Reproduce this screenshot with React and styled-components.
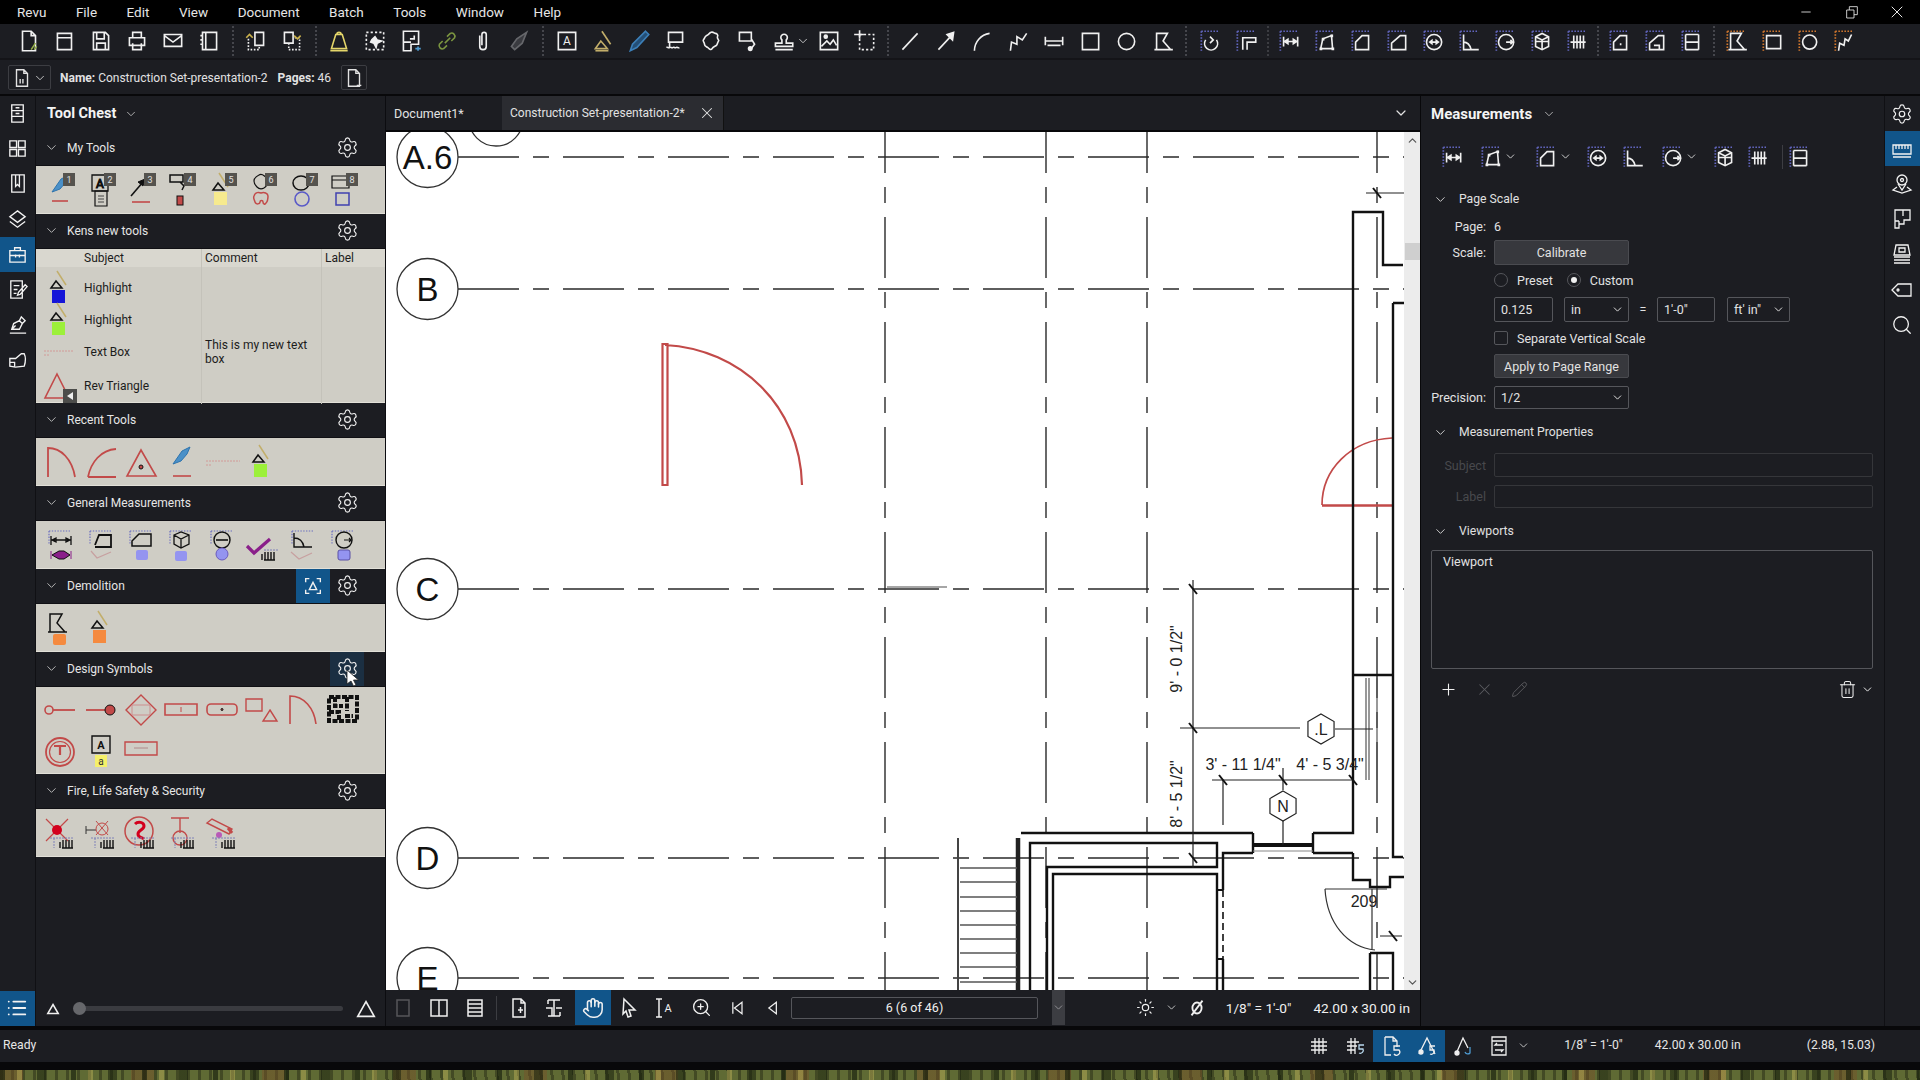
import React from "react";
import styled, { createGlobalStyle } from "styled-components";
import {
  ChevronDown,
  ChevronUp,
  Settings,
  List,
  Hand,
  X,
  Plus,
  Pencil,
  Trash2,
  Sun,
  Search,
  ZoomIn,
} from "lucide-react";

const GlobalStyle = createGlobalStyle`
  html, body {
    margin: 0;
    padding: 0;
    background: #000;
    overflow: hidden;
  }
  * { box-sizing: border-box; }
  body { font-family: Roboto, "Liberation Sans", sans-serif; }
`;

const Page = styled.div`
  width: 1920px;
  height: 1080px;
  display: flex;
  flex-direction: column;
  background: #08080a;
  color: #e2e2e2;
  font-size: 12.5px;
  overflow: hidden;
`;

const MenuBar = styled.div`
  height: 24px;
  background: #000;
  display: flex;
  align-items: center;
  gap: 29.5px;
  padding-left: 17px;
  font-size: 13.5px;
  color: #e6e6e6;
`;

const WindowButtons = styled.div`
  margin-left: auto;
  display: flex;
  align-items: center;
`;

const WinButton = styled.div`
  width: 45.5px;
  height: 24px;
  display: flex;
  align-items: center;
  justify-content: center;
`;

const ToolBar = styled.div`
  height: 36px;
  background: #1c1d22;
  display: flex;
  align-items: center;
  padding-left: 11px;
  border-bottom: 2px solid #141418;
  color: #f0f0f0;
`;

const ToolBtn = styled.div`
  width: ${({ $w }) => $w || 36}px;
  height: 34px;
  flex: none;
  display: flex;
  align-items: center;
  justify-content: ${({ $w }) => ($w ? "flex-start" : "center")};
  padding-left: ${({ $w }) => ($w ? 5 : 0)}px;
`;

const ToolSep = styled.div`
  width: ${({ $w }) => $w}px;
  height: 30px;
  flex: none;
  display: flex;
  justify-content: center;
  &::after {
    content: "";
    display: block;
    border-left: 2px dotted ${({ $thin }) => ($thin ? "#3c3d42" : "#45464c")};
  }
`;

const Glyph = styled.svg`
  width: ${({ $s }) => $s || 26}px;
  height: ${({ $s }) => $s || 26}px;
  flex: none;
  fill: none;
  stroke: currentColor;
  stroke-width: ${({ $sw }) => $sw || 1.5};
`;

const InfoBar = styled.div`
  height: 36px;
  background: #1c1d22;
  display: flex;
  align-items: center;
  padding: 1px 0 0 8px;
  font-size: 12px;
  border-bottom: 2px solid #08080a;
`;

const FileButton = styled.div`
  width: 43px;
  height: 25px;
  margin-right: 9px;
  border: 1px solid #3c3d42;
  border-radius: 2px;
  display: flex;
  align-items: center;
  padding-left: 2px;
`;

const InfoItem = styled.span`
  margin-right: ${({ $gap }) => $gap}px;
  white-space: nowrap;
  b { font-weight: 700; }
`;

const AddPageButton = styled.div`
  width: 26px;
  height: 25px;
  border: 1px solid #3c3d42;
  border-radius: 2px;
  display: flex;
  align-items: center;
  justify-content: center;
`;

const Main = styled.div`
  height: 930px;
  display: flex;
  background: #1c1d22;
`;

const Rail = styled.div`
  width: 36px;
  flex: none;
  display: flex;
  flex-direction: column;
  background: #1c1d22;
  border-${({ $right }) => ($right ? "left" : "right")}: 1px solid #101014;
`;

const RailItem = styled.div`
  height: 35.2px;
  flex: none;
  display: flex;
  align-items: center;
  justify-content: center;
  padding-right: 1px;
  color: #f2f2f2;
  background: ${({ $active }) => ($active ? "#11558a" : "transparent")};
  margin-top: ${({ $auto }) => ($auto ? "auto" : "0")};
`;

const ToolPanel = styled.div`
  width: 350px;
  flex: none;
  display: flex;
  flex-direction: column;
  border-right: 1px solid #0c0c10;
`;

const PanelTitle = styled.div`
  height: 35px;
  flex: none;
  display: flex;
  align-items: center;
  gap: ${({ $gap }) => $gap || 8}px;
  padding-left: ${({ $pad }) => $pad}px;
  font-size: ${({ $size }) => $size || 14.5}px;
  font-weight: 700;
  color: #f4f4f4;
`;

const Section = styled.div`
  display: flex;
  flex-direction: column;
`;

const SectionHead = styled.div`
  height: 35px;
  display: flex;
  align-items: center;
  padding: 0 0 1px 8px;
  color: #e6e6e6;
  font-size: 12px;
  border-bottom: 1px solid #101014;
`;

const HeadLabel = styled.span`
  margin-left: 8px;
  flex: 1;
`;

const HeadButton = styled.div`
  width: 34px;
  height: 34px;
  display: flex;
  align-items: center;
  justify-content: center;
  position: relative;
  background: ${({ $bg }) => $bg || "transparent"};
  color: #f0f0f0;
  margin-right: ${({ $mr }) => $mr || 0}px;
`;

const PointerMark = styled.svg`
  position: absolute;
  left: 16px;
  top: 17px;
  width: 13px;
  height: 18px;
`;

const IconTray = styled.div`
  background: #cfcdc5;
  display: flex;
  flex-wrap: wrap;
  row-gap: 5px;
  padding: ${({ $rows }) => ($rows > 1 ? "4px 0 3px 4px" : "5px 0 5px 4px")};
  border-bottom: 1px solid #e2e0d8;
`;

const TrayIcon = styled.div`
  width: 40.4px;
  height: 37px;
  display: flex;
  align-items: center;
  justify-content: center;
  color: #111;
`;

const ToolTable = styled.div`
  background: #cfcdc5;
  color: #1c1c1c;
  height: 154px;
  display: grid;
  grid-template-columns: 45px 120px 120px 1fr;
  grid-template-rows: 18px 37px 32px 32px 1fr;
  font-size: 12px;
  border-bottom: 1px solid #e2e0d8;
`;

const TableHead = styled.div`
  background: #d9d7cf;
  display: flex;
  align-items: center;
  padding-left: 3px;
  border-left: ${({ $line }) => ($line ? "1px solid #c4c2ba" : "none")};
`;

const TableCell = styled.div`
  display: flex;
  align-items: center;
  padding: ${({ $top }) => ($top ? "5px" : "0")} 0 0 3px;
  line-height: 14px;
  border-left: ${({ $line }) => ($line ? "1px solid #c4c2ba" : "none")};
`;

const TableIcon = styled.div`
  display: flex;
  align-items: center;
  justify-content: center;
  padding: ${({ $top }) => ($top ? "5px" : "0")} 0 0 2px;
`;

const SliderBar = styled.div`
  margin-top: auto;
  height: 35px;
  display: flex;
  align-items: center;
  padding: 0 8px 0 8px;
  color: #f0f0f0;
`;

const SliderTrack = styled.div`
  flex: 1;
  height: 5px;
  margin: 0 12px;
  background: #3a3b40;
  border-radius: 3px;
  position: relative;
`;

const SliderThumb = styled.div`
  position: absolute;
  left: -1px;
  top: -4px;
  width: 13px;
  height: 13px;
  border-radius: 50%;
  background: #66676b;
`;

const Center = styled.div`
  width: 1034px;
  flex: none;
  display: flex;
  flex-direction: column;
`;

const TabBar = styled.div`
  height: 36px;
  flex: none;
  display: flex;
  align-items: stretch;
  border-bottom: 2px solid #08080a;
  background: #1c1d22;
`;

const Tab = styled.div`
  width: ${({ $w }) => $w}px;
  display: flex;
  align-items: center;
  padding-left: ${({ $pad }) => $pad}px;
  white-space: nowrap;
  font-size: ${({ $active }) => ($active ? 12 : 12.5)}px;
  background: ${({ $active }) => ($active ? "#2b2c31" : "transparent")};
  border-right: ${({ $active }) => ($active ? "1px solid #111" : "none")};
`;

const TabClose = styled.div`
  margin-left: auto;
  margin-right: 7px;
  display: flex;
`;

const TabMenu = styled.div`
  margin-left: auto;
  width: 38px;
  display: flex;
  align-items: center;
  justify-content: center;
`;

const CanvasRow = styled.div`
  height: 858px;
  flex: none;
  display: flex;
`;

const PlanSheet = styled.svg`
  width: 1018px;
  height: 858px;
  display: block;
  background: #fff;
  flex: none;
  fill: none;
`;

const ScrollTrack = styled.div`
  width: 16px;
  flex: none;
  background: #ececec;
  color: #555;
  display: flex;
  flex-direction: column;
  align-items: center;
`;

const ScrollArrow = styled.div`
  height: 16px;
  display: flex;
  align-items: center;
  justify-content: center;
  margin-top: ${({ $end }) => ($end ? "auto" : "0")};
`;

const ScrollThumb = styled.div`
  width: 15px;
  height: 17px;
  margin-top: 95px;
  background: #cfcfcf;
`;

const DocBar = styled.div`
  height: 35px;
  flex: none;
  display: flex;
  align-items: center;
  color: #f0f0f0;
  margin-left: -1px;
`;

const DocBtn = styled.div`
  width: 36px;
  height: 35px;
  flex: none;
  display: flex;
  align-items: center;
  justify-content: center;
  margin-left: ${({ $ml }) => $ml || 0}px;
  background: ${({ $active }) => ($active ? "#11558a" : "transparent")};
  color: ${({ $dim }) => ($dim ? "#55565a" : "inherit")};
`;

const ThinRule = styled.div`
  width: 1px;
  height: 24px;
  margin: 0 3px;
  background: #3c3d42;
  flex: none;
`;

const PageField = styled.div`
  width: 247px;
  height: 22px;
  flex: none;
  border: 1px solid #55565b;
  border-radius: 2px;
  display: flex;
  align-items: center;
  justify-content: center;
  font-size: 12.5px;
`;

const PageChevron = styled.div`
  width: 13px;
  height: 35px;
  margin-left: 14px;
  flex: none;
  background: #3c3d42;
  display: flex;
  align-items: center;
  justify-content: center;
  color: #a0a0a4;
`;

const DocStats = styled.div`
  margin-left: auto;
  padding-right: 10px;
  display: flex;
  align-items: center;
  font-size: 13.7px;
  white-space: nowrap;
`;

const StatText = styled.span`
  display: flex;
  margin-left: ${({ $ml }) => $ml}px;
`;

const Measure = styled.div`
  width: 464px;
  flex: none;
  display: flex;
  flex-direction: column;
  border-left: 1px solid #08080a;
  padding: 0 11px 0 10px;
`;

const MeasureTools = styled.div`
  height: 35px;
  margin-top: 8px;
  flex: none;
  display: flex;
  align-items: center;
  padding-left: 8px;
  color: #f0f0f0;
`;

const MeasureTool = styled.div`
  width: ${({ $w }) => $w || 36}px;
  flex: none;
  display: flex;
  align-items: center;
  color: #f0f0f0;
`;

const FormRow = styled.div`
  height: ${({ $h }) => $h || 24}px;
  margin-top: ${({ $mt }) => $mt || 0}px;
  flex: none;
  display: flex;
  align-items: center;
`;

const FoldHead = styled(FormRow)`
  padding-left: 2px;
  gap: 11px;
  color: #e0e0e0;
  font-size: 12.2px;
`;

const FieldLabel = styled.span`
  width: 55px;
  margin-right: 8px;
  flex: none;
  text-align: right;
  white-space: nowrap;
  color: ${({ $off }) => ($off ? "#48494d" : "#e2e2e2")};
`;

const SoftButton = styled.div`
  width: 135px;
  height: 100%;
  display: flex;
  align-items: center;
  justify-content: center;
  background: #37383d;
  border: 1px solid #4a4b50;
  border-radius: 2px;
`;

const RadioDot = styled.span`
  width: 14px;
  height: 14px;
  flex: none;
  border-radius: 50%;
  border: 1px solid #55565b;
  margin-right: 9px;
  margin-left: ${({ $ml }) => $ml || 0}px;
  display: flex;
  align-items: center;
  justify-content: center;
  &::after {
    content: "";
    width: 6px;
    height: 6px;
    border-radius: 50%;
    background: ${({ $on }) => ($on ? "#f0f0f0" : "transparent")};
  }
`;

const TextBox = styled.div`
  width: ${({ $w }) => $w}px;
  height: 100%;
  margin-left: ${({ $ml }) => $ml || 0}px;
  flex: ${({ $grow }) => ($grow ? 1 : "none")};
  display: flex;
  align-items: center;
  justify-content: space-between;
  padding: 0 4px 0 6px;
  border: 1px solid ${({ $off }) => ($off ? "#35363a" : "#55565b")};
  border-radius: 2px;
`;

const Equals = styled.span`
  width: 28px;
  text-align: center;
`;

const CheckBox = styled.span`
  width: 14px;
  height: 14px;
  flex: none;
  margin-right: 9px;
  border: 1px solid #55565b;
  border-radius: 2px;
`;

const Indent = styled.div`
  width: 63px;
  flex: none;
`;

const ViewportBox = styled.div`
  height: 119px;
  margin-top: 7px;
  flex: none;
  padding: 3px 11px;
  border: 1px solid #55565b;
  border-radius: 2px;
`;

const ViewportTools = styled(FormRow)`
  padding-left: 8px;
  gap: 17px;
  color: #f0f0f0;
`;

const FadedTool = styled.span`
  display: flex;
  color: #5b5c60;
`;

const TrashTool = styled.span`
  margin-left: auto;
  display: flex;
  align-items: center;
  gap: 4px;
  margin-right: -1px;
`;

const StatusBar = styled.div`
  height: 32px;
  margin-top: 4px;
  flex: none;
  background: #1c1d22;
  display: flex;
  align-items: center;
  color: #e6e6e6;
  padding: 0 45px 2px 0;
  font-size: 12.2px;
  white-space: nowrap;
`;

const StatusIcons = styled.div`
  margin-left: auto;
  display: flex;
  align-items: center;
  color: #f0f0f0;
`;

const StatusBtn = styled.div`
  width: 36px;
  height: 32px;
  margin-bottom: -2px;
  display: flex;
  align-items: center;
  justify-content: center;
  background: ${({ $active }) => ($active ? "#11558a" : "transparent")};
`;

const Wallpaper = styled.div`
  height: 10px;
  margin-top: 8px;
  flex: none;
  background:
    repeating-linear-gradient(90deg, rgba(18, 26, 10, 0.6) 0 5px, transparent 5px 17px, rgba(205, 190, 95, 0.4) 17px 22px, transparent 22px 37px, rgba(18, 26, 10, 0.5) 37px 46px, transparent 46px 71px),
    repeating-linear-gradient(90deg, rgba(120, 80, 40, 0.45) 0 23px, transparent 23px 131px),
    repeating-linear-gradient(87deg, rgba(0, 0, 0, 0.3) 0 3px, transparent 3px 11px),
    #5f6a34;
`;

const RED = "#c24a49";
const BLUE_DOT = "#6468c4";
const ORANGE_DOT = "#d77a2e";

// ruled corner that marks every measurement tool
const Ruled = ({ c = BLUE_DOT }) => (
  <path d="M4 3h16M4 3v18" stroke={c} strokeDasharray="1.4 1.4" strokeWidth="1.6" />
);

const shapes = {
  length: <path d="M7 8v9M20 8v9M7 12.5h13M8 12.5l3-2v4zM19 12.5l-3-2v4z" />,
  polyline: (
    <>
      <path d="M8 19l2-9 8-3 1 12z" />
      <path d="M7 18h2.500v2.500H7zM9 9h2.500v2.500H9zM17 6h2.500v2.500H17zM18 18h2.500v2.500H18z" fill="currentColor" stroke="none" />
    </>
  ),
  area: <path d="M7 20v-7l6-6h6v13z" />,
  areaLow: <path d="M7 20v-6l8-7h5v13z" />,
  perimeter: <><circle cx="13" cy="13" r="7" /><path d="M9 13h8M9 13l2-1.500v3zM17 13l-2-1.500v3z" /></>,
  angle: <path d="M7 6v14h14M7 13c4 0 6 3 7 7" />,
  radius: <><circle cx="13" cy="13" r="7" /><path d="M13 13h6l-2-2M19 13l-2 2" /></>,
  volume: <><path d="M7 8l6-3 6 3v9l-6 3-6-3z" /><path d="M7 8l6 3 6-3M13 11v9M7 12.500h12" /></>,
  count: <path d="M9 7v12M12 7v12M15 7v12M18 7v12M6 13h14" />,
  cutArea: <><path d="M7 20v-7l6-6h6v13z" /><path d="M13 15h1M13.500 14v2" /></>,
  cutLow: <><path d="M7 20v-6l8-7h5v13z" /><path d="M11 16h5v4" /></>,
  span: <path d="M7 6v14M19 6v14M7 6h12M7 20h12M7 13h12" />,
  flag: <path d="M7 5h10l-4 7 7 8H7zM5 20h17" />,
  rect: <path d="M7 7h13v12H7z" />,
  circle: <circle cx="13.500" cy="13" r="6.500" />,
  zig: <path d="M7 21l1-7 4 2 1-6 3 2 3-6" />,
};

const tb = {
  newDoc: <><path d="M6 3h8l4 4v14H6zM14 3v4h4" /><path d="M14 20l4-6M17 20l2-3" stroke="#95b04a" /></>,
  open: <path d="M5 5h13v15H5zM5 9h13" />,
  save: <path d="M5 4h11l3 3v13H5zM8 4v6h7V4M8 20v-6h8v6" />,
  print: <path d="M8 9V4h8v5M5 9h14v7H5zM8 14v6h8v-6" />,
  mail: <path d="M4 6h16v11H4zM4 7l8 6 8-6" />,
  notebook: <path d="M6 4h13v16H6zM9 4v16M4 7h2M4 11h2M4 15h2" />,
  impIn: <><path d="M11 4h8v12h-8z" /><path d="M5 10v10h10v-4" strokeDasharray="1.500 1.500" /><path d="M3 9l3-3 3 3" stroke="#c9b04a" /></>,
  impOut: <><path d="M5 4h8v10H5z" /><path d="M9 14v6h10V9h-6" strokeDasharray="1.500 1.500" /><path d="M14 7l3 3 3-3" stroke="#c9b04a" /></>,
  weight: <path d="M9 6h6l4 13H5zM4 21h16M10 6a2 2 0 0 1 4 0" stroke="#e4d66a" />,
  lasso: <><path d="M4 4h16v16H4z" strokeDasharray="2 2" /><path d="M9 11l3-3 2 3 4 1-4 2-1 4-2-4-3-1z" fill="currentColor" /></>,
  sheet: <><path d="M5 3h14v12H12v6H5zM5 13h7" /><path d="M11 10h4v-3" /><path d="M16 19h5M18.500 17v4" stroke="#4e9ad0" /></>,
  link: <path d="M10 14l5-5M8 12l-3 3a3 3 0 0 0 4 4l3-3M16 12l3-3a3 3 0 0 0-4-4l-3 3" stroke="#7a9440" />,
  clip: <path d="M9 7v10a3 3 0 0 0 6 0V6a2 2 0 0 0-4 0v10" />,
  flash: <path d="M8 20l-3-3 5-7 9-6-4 10z" stroke="#66676b" fill="#3a3b40" />,
  textBox: <><path d="M4 4h16v16H4z" /><text x="12" y="16" fontSize="11" textAnchor="middle" fill="currentColor" stroke="none" fontFamily="Roboto">A</text></>,
  compass: <><path d="M11 3l8 12" stroke="#c2ae6a" /><path d="M5 19l5-7 6 7z" stroke="#c2ae6a" /><path d="M5 21h12" stroke="#c2ae6a" /></>,
  pen: <path d="M18 3l3 3-11 12-6 3 2-6z" stroke="#3c7fb8" fill="#244f77" />,
  rectCloud: <path d="M6 4h13v9H6zM7 13v5M4 18c1-1 2 1 3 0s2 1 3 0 2 1 3 0 2 1 3 0" />,
  cloud: <path d="M12 4c2-1 3 1 4 1s3 1 2 3 2 3 1 4-1 3-2 4-3 1-4 3-3 0-4-1-3-1-3-3-2-3-1-4 1-3 3-4 3-3 4-3z" />,
  callout: <><path d="M5 4h11v8H5zM16 10l3 5-3 4" /><circle cx="15" cy="19" r="1.600" fill="currentColor" /></>,
  stamp: <path d="M5 20h16M5 17h16v-3h-6v-3a3 3 0 1 0-4 0v3H5z" />,
  image: <><path d="M4 4h16v16H4z" /><path d="M5 17l5-5 3 3 3-4 3 5" /><circle cx="9" cy="8" r="1.400" fill="currentColor" /></>,
  crop: <><path d="M7 6h13v14H7z" strokeDasharray="2 2" /><path d="M2 6h9M7 2v8" /></>,
  line: <path d="M5 20L19 5" />,
  arrow: <><path d="M5 20L19 5" /><path d="M13 6l6-2-1 7z" fill="currentColor" /></>,
  arc: <path d="M5 21c0-8 6-15 14-16" />,
  zig: <path d="M5 21l1-8 5 2 0-7 5 3 4-6" />,
  dim: <path d="M4 8v8M20 8v8M4 12h16M6 16h12" />,
  sameRect: <path d="M5 5h15v15H5z" />,
  ellipse: <circle cx="12.500" cy="12.500" r="7.500" />,
  flag: shapes.flag,
  ruleSync: <><Ruled /><path d="M18 11a6 6 0 1 1-10 0M12 8l3 3-3 3" /></>,
  ruleStair: <><Ruled /><path d="M9 20V9h12v4h-8v7M13 13v7" /></>,
  pageAdd: <><path d="M7 3h8l4 4v14H7zM15 3v4h4" /><path d="M12 14h5M14.500 11v6" /></>,
  fit: <path d="M6 4h12M6 20h12M12 4v16M6 4v4M18 16v4M4 12h6v8M20 12h-6" />,
  singlePage: <path d="M6 4h12v16H6z" />,
  twoCol: <path d="M4 4h16v16H4zM12 4v16" />,
  rows: <path d="M5 4h14v16H5zM5 8h14M5 12h14M5 16h14" />,
  pointer: <path d="M7 3l11 11h-6l2 6-3 1-2-6-3 3z" />,
  select: <><path d="M6 3v18M3 3h6M3 21h6" /><text x="15" y="16" fontSize="11" fill="currentColor" stroke="none" textAnchor="middle" fontFamily="Roboto">A</text></>,
  first: <path d="M7 5v14M18 5L9 12l9 7z" />,
  prev: <path d="M16 5L7 12l9 7z" />,
  noSync: <><path d="M6 20L18 4" /><ellipse cx="12" cy="12" rx="5" ry="6" /></>,
  grid: <path d="M4 8h16M4 12h16M4 16h16M8 4v16M12 4v16M16 4v16" />,
  snap: <><path d="M4 8h12M4 12h10M4 16h8M8 4v16M12 4v16" /><path d="M21 11h-5v4h4a3 3 0 0 1-4 4" stroke="#b8d8ee" /></>,
  snapPage: <><path d="M6 3h8l4 4v6M6 3v18h6M14 3v4h4" /><path d="M21 12h-6v4h5a3 3 0 0 1-5 4" /></>,
  snapTool: <><path d="M4 20l8-16 8 16" /><circle cx="6" cy="18" r="2" fill="currentColor" /><path d="M20 12h-5v4h4a3 3 0 0 1-4 4" /></>,
  snapOff: <><path d="M5 20l7-16 5 10" /><circle cx="6" cy="19" r="2" fill="currentColor" /><path d="M19 13v6a3 3 0 0 1-5-1" stroke="#4e9ad0" /></>,
  swap: <path d="M5 3h14v18H5zM5 7h14M16 11H8l2-2M8 16h8l-2 2" />,
};

const measured = (name, c = BLUE_DOT) => (
  <>
    <Ruled c={c} />
    {shapes[name]}
  </>
);

const TbIcon = ({ icon, size, sw }) => (
  <Glyph viewBox="0 0 24 24" $s={size} $sw={sw}>
    {icon}
  </Glyph>
);

const rail = {
  files: <path d="M6 3h12v18H6zM6 9h12M6 15h12M10 6h4M10 12h4" />,
  thumbs: <path d="M4 4h7v7H4zM13 4h7v7h-7zM4 13h7v7H4zM13 13h7v7h-7z" />,
  bookmark: <path d="M6 3h13v18H6zM10 3v12l2-2 2 2V3" />,
  layers: <path d="M12 3l8 6-8 6-8-6zM4 14l8 6 8-6" />,
  chest: <path d="M4 8h16v12H4zM9 8V5h6v3M4 13h16M10 12v3M14 12v3" />,
  markups: <path d="M5 3h12v18H5zM8 8h6M8 12h4M8 16h3M20 7l-7 8-1 3 3-1 7-8z" />,
  sign: <path d="M4 21h17M6 17l2-6 6-3 3 3-3 6zM14 8l2-4 4 4-3 3M6 17l4-4" />,
  cloud: <path d="M4 11h6l6-5h3c2 4 1 10 0 13l-9 1-6-1zM4 15h5v4" />,
  pin: <><circle cx="12" cy="8" r="5" /><circle cx="12" cy="8" r="1.500" /><path d="M8 12l4 6 4-6M7 15l-4 3 9 3 9-3-4-3" /></>,
  plan: <path d="M5 3h15v10h-6v4H9v4H5zM5 14h4M13 3v6M9 17v-3" />,
  stack: <path d="M6 3h12l2 10H4zM9 6h6v4H9zM4 15h16M4 18h16M4 21h16" />,
  tag: <><path d="M21 6H8l-6 6 6 6h13z" /><circle cx="8" cy="12" r="1" /></>,
  ruler: <path d="M3 8h18v9H3zM6 8v4M9 8v4M12 8v4M15 8v4M18 8v4M3 20h18" />,
};

const leftRail = ["files", "thumbs", "bookmark", "layers", "chest", "markups", "sign", "cloud"];
const rightRail = ["gear", "ruler", "pin", "plan", "stack", "tag", "search"];

const toolbarGroups = [
  { sep: 11, items: [tb.newDoc, tb.open, tb.save, tb.print, tb.mail, tb.notebook] },
  { sep: 11, items: [tb.impIn, tb.impOut] },
  { sep: 12, items: [tb.weight, tb.lasso, tb.sheet, tb.link, tb.clip, tb.flash] },
  { sep: 9, items: [tb.textBox, tb.compass, tb.pen, tb.rectCloud, tb.cloud, tb.callout, "stamp", tb.image, tb.crop] },
  { sep: 12, items: [tb.line, tb.arrow, tb.arc, tb.zig, tb.dim, tb.sameRect, tb.ellipse, tb.flag] },
  { sep: 7, thin: true, items: [tb.ruleSync, tb.ruleStair] },
  { sep: 6, items: ["length", "polyline", "area", "areaLow", "perimeter", "angle", "radius", "volume", "count"].map((n) => measured(n)) },
  { sep: 9, items: ["cutArea", "cutLow", "span"].map((n) => measured(n)) },
  { items: ["flag", "rect", "circle", "zig"].map((n) => measured(n, ORANGE_DOT)) },
];

const measureTools = [
  { icon: "length", w: 39 },
  { icon: "polyline", w: 55, more: true },
  { icon: "area", w: 51, more: true },
  { icon: "perimeter", w: 36 },
  { icon: "angle", w: 39 },
  { icon: "radius", w: 52, more: true },
  { icon: "volume", w: 34 },
  { icon: "count", w: 34 },
];

// ----- chest tool pictures, drawn on a 36 unit square
const Badge = ({ n }) => (
  <g stroke="none">
    <rect x="21" y="1" width="12" height="13" fill="#55534e" />
    <text x="27" y="11" fontSize="9" fill="#e0e0e0" textAnchor="middle" fontFamily="Roboto">
      {n}
    </text>
  </g>
);

const Compass = () => (
  <g>
    <path d="M15 1l9 14" stroke="#c2ae6a" strokeWidth="1.500" />
    <path d="M9 18l5-7 6 7z" stroke="#111" strokeWidth="1.500" />
  </g>
);

const Brush = () => <path d="M27 3l-8 4-9 13 8-3 6-7z" fill="#4a90c8" stroke="#2f74ad" strokeWidth="1" />;
const Tally = () => <path d="M21 25v8M24 25v8M27 25v8M30 25v8M20 33h11M18 27v6" stroke="#111" strokeWidth="1.400" />;
const TallyLine = () => <path d="M8 23h24M12 23v10" stroke="#7f81b8" strokeWidth="1" strokeDasharray="2 1" />;
const Ruler36 = () => <path d="M7 4h22M7 4v14" stroke="#6a6ec0" strokeWidth="1.200" strokeDasharray="1.400 1.400" />;

const highlight = (fill) => (
  <>
    <Compass />
    <rect x="10" y="20" width="13" height="13" fill={fill} stroke="none" />
  </>
);

const myTools = [
  <><Brush /><path d="M10 29h16" stroke={RED} strokeWidth="1.600" /><Badge n="1" /></>,
  <><path d="M9 3h16v16H9z" stroke="#111" strokeWidth="1.300" /><text x="17" y="16" fontSize="12" fill="#111" textAnchor="middle" fontFamily="Roboto">A</text><path d="M12 19h12v15H12z" stroke="#111" strokeWidth="1.200" /><path d="M15 24h6M15 27h6M15 30h6" stroke="#444" /><Badge n="2" /></>,
  <><path d="M8 24l12-14" stroke="#111" strokeWidth="1.600" /><path d="M15 10l7-3-2 7z" fill="#111" /><path d="M9 30h18" stroke={RED} strokeWidth="1.600" /><Badge n="3" /></>,
  <><path d="M7 3h13v7H7zM17 10l4 4-2 4" stroke="#111" strokeWidth="1.500" /><rect x="14" y="24" width="6" height="9" fill={RED} /><Badge n="4" /></>,
  <>{highlight("#f6ea8e")}<Badge n="5" /></>,
  <><path d="M15 3c3-2 5 1 7 2s3 4 2 6-2 4-4 5-5 1-7-1-3-3-3-6 3-5 5-6z" stroke="#111" strokeWidth="1.200" /><path d="M10 24c1-4 5-4 7-3 3-1 7 0 7 3s0 5-2 7c-1 2-3 1-3-1s-3-2-3 0-4 3-5 0-2-4-1-6z" stroke={RED} strokeWidth="1.500" /><Badge n="6" /></>,
  <><ellipse cx="16" cy="11" rx="8" ry="7" stroke="#111" strokeWidth="1.500" /><circle cx="17" cy="27" r="7" stroke="#5a5ac8" strokeWidth="1.600" /><Badge n="7" /></>,
  <><path d="M7 4h17v12H7zM7 8h17" stroke="#111" strokeWidth="1.200" /><path d="M11 21h13v12H11z" stroke="#4242b0" strokeWidth="1.500" /><Badge n="8" /></>,
];

const doorArc = (
  <path d="M5 32V4c14 0 24 12 26 28" stroke={RED} strokeWidth="1.600" />
);

const recentTools = [
  <path d="M6 33V4c13 0 24 11 27 29" stroke={RED} strokeWidth="1.800" />,
  <path d="M5 33h28M5 33C8 18 18 6 33 5" stroke={RED} strokeWidth="1.800" />,
  <><path d="M18 6L33 32H4z" stroke={RED} strokeWidth="1.600" /><circle cx="18" cy="23" r="2" fill={RED} /></>,
  <><Brush /><path d="M10 32h18" stroke={RED} strokeWidth="1.600" /></>,
  <path d="M2 17h34M2 21h6" stroke="#d29a97" strokeWidth="1" strokeDasharray="2 1" />,
  <>{highlight("#9cf03a")}</>,
];

const generalTools = [
  <><Ruler36 /><path d="M9 9v9M29 9v9M9 13h20M10 13l4-2v4zM28 13l-4-2v4z" stroke="#111" strokeWidth="1.300" /><path d="M10 28l7-4 5 0 6 4-6 4h-5z" fill="#8a1f8a" /><path d="M9 24v8M29 24v8" stroke="#8a1f8a" /></>,
  <><Ruler36 /><path d="M12 18l4-10h12v12H12" stroke="#111" strokeWidth="1.800" /><path d="M8 24l6 7 14-6" stroke="#c7a0a0" strokeWidth="1.200" /></>,
  <><Ruler36 /><path d="M9 19v-5l7-7h12v12z" stroke="#111" strokeWidth="1.500" /><rect x="13" y="23" width="12" height="10" rx="2" fill="#9494f0" stroke="none" /></>,
  <><Ruler36 /><path d="M11 8l7-3 8 3v9l-8 4-7-4z M11 8l7 4 8-4M18 12v9" stroke="#111" strokeWidth="1.300" /><rect x="12" y="24" width="12" height="10" rx="2" fill="#9494f0" stroke="none" /></>,
  <><Ruler36 /><circle cx="18" cy="13" r="8" stroke="#111" strokeWidth="1.400" /><path d="M12 13h12" stroke="#111" strokeWidth="1.600" /><circle cx="18" cy="27" r="6" fill="#9494f0" stroke="#6a5abf" /></>,
  <><path d="M3 19l7 7 16-14" stroke="#8a1f8a" strokeWidth="3.200" /><Tally /><path d="M20 23h14" stroke="#7f81b8" strokeDasharray="2 1" /></>,
  <><Ruler36 /><path d="M9 6v14h18M9 11c6 0 9 4 10 9" stroke="#111" strokeWidth="1.400" /><path d="M6 25l8 7 13-6" stroke="#c7a0a0" strokeWidth="1.200" /></>,
  <><Ruler36 /><circle cx="19" cy="13" r="8" stroke="#111" strokeWidth="1.400" /><path d="M19 13h7l-2-2M26 13l-2 2" stroke="#111" strokeWidth="1.200" /><rect x="13" y="23" width="12" height="10" rx="2" fill="#9494f0" stroke="#5a50a5" /></>,
];

const demoTools = [
  <><path d="M8 4h12l-5 9 8 9H8zM6 22h19" stroke="#111" strokeWidth="1.500" /><rect x="11" y="24" width="13" height="11" rx="2" fill="#f58a3f" stroke="none" /></>,
  <>{highlight("#f58a3f")}</>,
];

const lineSym = (
  <><circle cx="7" cy="18" r="4" stroke={RED} strokeWidth="1.600" /><path d="M11 18h22" stroke={RED} strokeWidth="1.800" /></>
);

const mazeSym = (
  <path d="M4 5h28v24H4zM10 5v9h8M22 5v14M4 20h10v9M20 24h8" stroke="#111" strokeWidth="4" strokeDasharray="5 1.500" />
);

const designTools = [
  lineSym,
  <><path d="M3 18h22" stroke={RED} strokeWidth="1.800" /><circle cx="27" cy="18" r="5" fill={RED} /></>,
  <><path d="M18 3l15 15-15 15L3 18z" stroke={RED} strokeWidth="1.400" /><path d="M9 13h18v10H9z" stroke="#cc8f8f" strokeWidth="1" /></>,
  <><path d="M2 12h32v11H2z" stroke={RED} strokeWidth="1.600" /><path d="M18 15v5" stroke={RED} /></>,
  <><rect x="3" y="12" width="30" height="11" rx="4" stroke={RED} strokeWidth="1.600" /><circle cx="18" cy="17.500" r="1" fill={RED} /></>,
  <><path d="M2 7h16v12H2zM26 18l7 11H19z" stroke={RED} strokeWidth="1.400" /></>,
  doorArc,
  mazeSym,
  <><circle cx="18" cy="18" r="14" stroke={RED} strokeWidth="1.800" /><circle cx="18" cy="18" r="10.500" stroke={RED} strokeWidth="1.200" /><path d="M12 12h12M18 12v9" stroke={RED} strokeWidth="2.200" /></>,
  <><path d="M9 2h18v17H9z" stroke="#111" strokeWidth="1.400" /><text x="18" y="15" fontSize="11" fill="#111" stroke="none" textAnchor="middle" fontFamily="Roboto" fontWeight="700">A</text><rect x="12" y="21" width="12" height="12" fill="#f5f06a" stroke="none" /><text x="18" y="31" fontSize="10" fill="#333" stroke="none" textAnchor="middle" fontFamily="Roboto">a</text></>,
  <><path d="M2 8h32v13H2z" stroke={RED} strokeWidth="1.400" /><path d="M11 14h14" stroke="#b08a8a" /></>,
];

const fireMark = (children) => (
  <>
    {children}
    <TallyLine />
    <Tally />
  </>
);

const fireTools = [
  fireMark(<><path d="M4 4l22 22M26 4L4 26" stroke={RED} strokeWidth="1.200" /><circle cx="15" cy="15" r="5" fill="#d3001d" stroke="none" /></>),
  fireMark(<><path d="M3 15h10M3 11v8" stroke="#333" /><circle cx="19" cy="14" r="6" stroke={RED} /><path d="M13 6l12 14M25 6L13 20" stroke={RED} /></>),
  fireMark(<><circle cx="16" cy="16" r="14" stroke={RED} strokeWidth="1.500" /><path d="M12 9c3-3 9-2 9 2s-6 4-6 8 4 3 6 5" stroke="#d3001d" strokeWidth="3" /></>),
  fireMark(<><path d="M8 3h18M17 3v15" stroke={RED} strokeWidth="1.400" /><circle cx="17" cy="23" r="7" stroke={RED} strokeWidth="1.400" /></>),
  fireMark(<><path d="M3 8l5-4 20 10-3 5z" stroke={RED} strokeWidth="1.400" /><path d="M24 13l4 5" stroke={RED} strokeWidth="3" /><circle cx="15" cy="20" r="3" fill="#b85ab8" stroke="none" /></>),
];

const tableRows = [
  { icon: highlight("#1515d8"), subject: "Highlight" },
  { icon: highlight("#9cf03a"), subject: "Highlight" },
  { icon: <path d="M2 17h30M2 21h6" stroke="#d29a97" strokeWidth="1" strokeDasharray="2 1" />, subject: "Text Box", comment: "This is my new text box" },
  {
    icon: (
      <>
        <path d="M15 6L27 30H3z" stroke={RED} strokeWidth="1.600" />
        <rect x="21" y="21" width="14" height="14" fill="#4c4c4a" stroke="none" />
        <path d="M31 24l-6 4 6 4z" fill="#eee" stroke="none" />
      </>
    ),
    subject: "Rev Triangle",
  },
];

const ChestIcon = ({ children }) => (
  <Glyph viewBox="0 0 36 36" $s={36} $sw={1}>
    {children}
  </Glyph>
);

const Tray = ({ icons, rows = 1 }) => (
  <IconTray $rows={rows}>
    {icons.map((icon, i) => (
      <TrayIcon key={i}>
        <ChestIcon>{icon}</ChestIcon>
      </TrayIcon>
    ))}
  </IconTray>
);

const ChestHead = ({ title, highlightGear, shot, pointer }) => (
  <SectionHead>
    <ChevronDown size={15} strokeWidth={1.4} color="#c8c8c8" />
    <HeadLabel>{title}</HeadLabel>
    {shot && (
      <HeadButton $bg="#11558a">
        <TbIcon
          size={22}
          icon={<path d="M4 8V4h4M16 4h4v4M20 16v4h-4M8 20H4v-4M12 8l4 8H8z" />}
        />
      </HeadButton>
    )}
    <HeadButton $mr={21} $bg={highlightGear ? "#1b2f42" : undefined}>
      <Settings size={23} strokeWidth={1.2} />
      {pointer && (
        <PointerMark viewBox="0 0 13 18">
          <path d="M1 1v14l4-3 2.500 5 2.500-1-2.500-5h5z" fill="#fff" stroke="#222" strokeWidth="0.800" />
        </PointerMark>
      )}
    </HeadButton>
  </SectionHead>
);

const Plan = () => {
  const axis = { stroke: "#2a2a2a", strokeWidth: 1.4, strokeDasharray: "61 14 16 14" };
  const wall = { stroke: "#111", strokeWidth: 2.4 };
  const thin = { stroke: "#222", strokeWidth: 1.2 };
  const label = { fill: "#222", fontFamily: "Liberation Sans", fontSize: 16, stroke: "none" };
  const bubbles = [
    ["A.6", 157],
    ["B", 289],
    ["C", 589],
    ["D", 858],
    ["E", 978],
  ];
  const ticks = [[1193, 589], [1193, 728], [1193, 858], [1223, 780], [1283, 780], [1353, 780], [1377, 193], [1393, 936]];
  const hex = (cx, cy, r) => {
    const h = r * 0.87;
    return `M${cx} ${cy - r}L${cx + h} ${cy - r / 2}V${cy + r / 2}L${cx} ${cy + r}L${cx - h} ${cy + r / 2}V${cy - r / 2}Z`;
  };
  const treads = [868, 882, 897, 911, 925, 939, 953, 967, 982];

  return (
    <PlanSheet viewBox="386 132 1018 858">
      {bubbles.map(([name, y]) => (
        <g key={name}>
          <path d={`M458 ${y}H1404`} {...axis} />
          <circle cx="427.500" cy={y} r="30.500" stroke="#333" strokeWidth="1.300" fill="#fff" />
          <text x="427.500" y={y + 12} textAnchor="middle" fontFamily="Liberation Sans" fontSize="33" fill="#111">
            {name}
          </text>
        </g>
      ))}
      <circle cx="496" cy="119" r="27" stroke="#333" strokeWidth="1.300" />
      {[885, 1046, 1147, 1377].map((x) => (
        <path key={x} d={`M${x} 132V990`} {...axis} strokeDashoffset="20" />
      ))}
      <path d="M887 587h60" stroke="#888" strokeWidth="1.500" />

      <path d="M662.500 344h5v141h-5zM665 345c75 4 135 60 137 140" stroke={RED} strokeWidth="2.200" />
      <path d="M1322 505h70M1322 506h70M1322 505c0-35 28-65 70-67" stroke={RED} strokeWidth="1.700" />

      <path d="M1353 675V212h30v53h20M1353 675h40M1393 303h11M1393 303V675M1353 675V833H1313" {...wall} />
      <path d="M1366 678V780M1377 678V780M1369 678V780" stroke="#555" strokeWidth="1.200" />
      <path d="M1393 675V857h10" {...wall} />
      <path d="M1353 853H1313M1353 853V880H1370V887H1390V877H1404" {...wall} />
      <path d="M1370 953h23V990M1370 953V990" {...wall} />
      <path d="M1021 833H1253M1030 990V843H1217V867H1047V990M1053 990V874H1217V990M1223 890V853H1253M1223 959V990" {...wall} />
      <path d="M1253 833V853M1313 833V853" {...wall} />
      <path d="M1253 845h60" stroke="#111" strokeWidth="4" />
      <path d="M1253 851h60" stroke="#888" strokeWidth="1.200" />
      <path d="M1018 838V990" stroke="#222" strokeWidth="4.500" />
      <path d="M958 838V990" stroke="#444" strokeWidth="2" />
      {treads.map((y) => (
        <path key={y} d={`M960 ${y}H1017`} stroke="#555" strokeWidth="1.400" />
      ))}
      <path d="M1217 890h6M1217 959h6" stroke="#111" strokeWidth="2" />
      <path d="M1223 890V959" stroke="#111" strokeWidth="1.600" strokeDasharray="7 4" />

      <path d="M1193 580V868M1180 728H1300M1335 729H1373M1212 780H1353M1223 780V825M1283 768V790M1283 821V845M1366 193H1404M1380 936H1402" {...thin} />
      {ticks.map(([x, y]) => (
        <path key={`${x}-${y}`} d={`M${x - 4} ${y - 5}L${x + 4} ${y + 5}`} stroke="#111" strokeWidth="2" />
      ))}
      <path d={hex(1321, 729, 15)} {...thin} fill="#fff" />
      <path d={hex(1283, 806, 15)} {...thin} fill="#fff" />
      <text x="1321" y="735" textAnchor="middle" {...label}>.L</text>
      <text x="1283" y="812" textAnchor="middle" {...label}>N</text>
      <text x="1243" y="770" textAnchor="middle" {...label}>3' - 11 1/4"</text>
      <text x="1330" y="770" textAnchor="middle" {...label}>4' - 5 3/4"</text>
      <text x="1364" y="907" textAnchor="middle" {...label}>209</text>
      <text x="1182" y="659" textAnchor="middle" transform="rotate(-90 1182 659)" {...label}>9' - 0 1/2"</text>
      <text x="1182" y="794" textAnchor="middle" transform="rotate(-90 1182 794)" {...label}>8' - 5 1/2"</text>
      <path d="M1325 889h62M1372 889V950M1325 889c2 34 22 58 50 61" stroke="#333" strokeWidth="1.200" />
    </PlanSheet>
  );
};

const App = () => (
  <Page>
    <GlobalStyle />
    <MenuBar>
      {["Revu", "File", "Edit", "View", "Document", "Batch", "Tools", "Window", "Help"].map((m) => (
        <span key={m}>{m}</span>
      ))}
      <WindowButtons>
        <WinButton>
          <TbIcon size={16} sw={1.3} icon={<path d="M5 12h14" />} />
        </WinButton>
        <WinButton>
          <TbIcon size={16} sw={1.3} icon={<path d="M4 9h11v12H4zM8 9V4h12v12h-5" />} />
        </WinButton>
        <WinButton>
          <X size={20} strokeWidth={1.2} />
        </WinButton>
      </WindowButtons>
    </MenuBar>

    <ToolBar>
      {toolbarGroups.map((group, g) => (
        <React.Fragment key={g}>
          {group.items.map((icon, i) =>
            icon === "stamp" ? (
              <ToolBtn key={i} $w={46}>
                <TbIcon icon={tb.stamp} />
                <ChevronDown size={14} strokeWidth={1.3} />
              </ToolBtn>
            ) : (
              <ToolBtn key={i}>
                <TbIcon icon={icon} />
              </ToolBtn>
            )
          )}
          {group.sep && <ToolSep $w={group.sep} $thin={group.thin} />}
        </React.Fragment>
      ))}
    </ToolBar>

    <InfoBar>
      <FileButton>
        <TbIcon size={22} icon={<path d="M6 3h8l4 4v14H6zM14 3v4h4M10 18v-5M13 18v-5" />} />
        <ChevronDown size={14} strokeWidth={1.4} />
      </FileButton>
      <InfoItem $gap={10}>
        <b>Name:</b> Construction Set-presentation-2
      </InfoItem>
      <InfoItem $gap={10}>
        <b>Pages:</b> 46
      </InfoItem>
      <AddPageButton>
        <TbIcon size={22} icon={<path d="M6 3h8l4 4v14H6zM14 3v4h4M15 20h5" />} />
      </AddPageButton>
    </InfoBar>

    <Main>
      <Rail>
        {leftRail.map((name) => (
          <RailItem key={name} $active={name === "chest"}>
            <TbIcon size={23} sw={1.4} icon={rail[name]} />
          </RailItem>
        ))}
        <RailItem $active $auto>
          <List size={22} strokeWidth={2} />
        </RailItem>
      </Rail>

      <ToolPanel>
        <PanelTitle $pad={11}>
          Tool Chest
          <ChevronDown size={14} strokeWidth={1.4} color="#c8c8c8" />
        </PanelTitle>

        <Section>
          <ChestHead title="My Tools" />
          <Tray icons={myTools} />
        </Section>

        <Section>
          <ChestHead title="Kens new tools" />
          <ToolTable>
            <TableHead />
            <TableHead>Subject</TableHead>
            <TableHead $line>Comment</TableHead>
            <TableHead $line>Label</TableHead>
            {tableRows.map((row, i) => (
              <React.Fragment key={i}>
                <TableIcon $top={i === 0}>
                  <ChestIcon>{row.icon}</ChestIcon>
                </TableIcon>
                <TableCell $top={i === 0}>{row.subject}</TableCell>
                <TableCell $top={i === 0} $line>{row.comment}</TableCell>
                <TableCell $top={i === 0} $line />
              </React.Fragment>
            ))}
          </ToolTable>
        </Section>

        <Section>
          <ChestHead title="Recent Tools" />
          <Tray icons={recentTools} />
        </Section>

        <Section>
          <ChestHead title="General Measurements" />
          <Tray icons={generalTools} />
        </Section>

        <Section>
          <ChestHead title="Demolition" shot />
          <Tray icons={demoTools} />
        </Section>

        <Section>
          <ChestHead title="Design Symbols" highlightGear pointer />
          <Tray icons={designTools} rows={2} />
        </Section>

        <Section>
          <ChestHead title="Fire, Life Safety & Security" />
          <Tray icons={fireTools} />
        </Section>

        <SliderBar>
          <TbIcon size={18} sw={2} icon={<path d="M12 6l7 12H5z" />} />
          <SliderTrack>
            <SliderThumb />
          </SliderTrack>
          <TbIcon size={22} sw={1.8} icon={<path d="M12 4l9 16H3z" />} />
        </SliderBar>
      </ToolPanel>

      <Center>
        <TabBar>
          <Tab $w={116} $pad={8}>Document1*</Tab>
          <Tab $w={222} $pad={8} $active>
            Construction Set-presentation-2*
            <TabClose>
              <X size={18} strokeWidth={1.4} />
            </TabClose>
          </Tab>
          <TabMenu>
            <ChevronDown size={16} strokeWidth={1.8} />
          </TabMenu>
        </TabBar>

        <CanvasRow>
          <Plan />
          <ScrollTrack>
            <ScrollArrow>
              <ChevronUp size={13} strokeWidth={2.2} />
            </ScrollArrow>
            <ScrollThumb />
            <ScrollArrow $end>
              <ChevronDown size={13} strokeWidth={2.2} />
            </ScrollArrow>
          </ScrollTrack>
        </CanvasRow>

        <DocBar>
          <DocBtn $dim>
            <TbIcon size={24} icon={tb.singlePage} />
          </DocBtn>
          <DocBtn>
            <TbIcon size={24} icon={tb.twoCol} />
          </DocBtn>
          <DocBtn>
            <TbIcon size={24} icon={tb.rows} />
          </DocBtn>
          <ThinRule />
          <DocBtn>
            <TbIcon size={24} icon={tb.pageAdd} />
          </DocBtn>
          <DocBtn>
            <TbIcon size={24} icon={tb.fit} />
          </DocBtn>
          <DocBtn $active $ml={3}>
            <Hand size={22} strokeWidth={1.7} />
          </DocBtn>
          <DocBtn>
            <TbIcon size={24} icon={tb.pointer} />
          </DocBtn>
          <DocBtn>
            <TbIcon size={24} icon={tb.select} />
          </DocBtn>
          <DocBtn>
            <ZoomIn size={21} strokeWidth={1.5} />
          </DocBtn>
          <DocBtn>
            <TbIcon size={20} icon={tb.first} />
          </DocBtn>
          <DocBtn>
            <TbIcon size={20} icon={tb.prev} />
          </DocBtn>
          <PageField>6 (6 of 46)</PageField>
          <PageChevron>
            <ChevronDown size={13} strokeWidth={1.5} />
          </PageChevron>
          <DocStats>
            <Sun size={19} strokeWidth={1.5} />
            <StatText $ml={10}>
              <ChevronDown size={13} strokeWidth={1.4} />
            </StatText>
            <StatText $ml={8}>
              <TbIcon size={22} sw={2} icon={tb.noSync} />
            </StatText>
            <StatText $ml={18}>1/8" = 1'-0"</StatText>
            <StatText $ml={22}>42.00 x 30.00 in</StatText>
          </DocStats>
        </DocBar>
      </Center>

      <Measure>
        <PanelTitle $pad={0} $size={15} $gap={10}>
          Measurements
          <ChevronDown size={14} strokeWidth={1.4} color="#c8c8c8" />
        </PanelTitle>

        <MeasureTools>
          {measureTools.map((t) => (
            <MeasureTool key={t.icon} $w={t.w}>
              <TbIcon size={26} icon={measured(t.icon)} />
              {t.more && <ChevronDown size={13} strokeWidth={1.5} />}
            </MeasureTool>
          ))}
          <ThinRule />
          <MeasureTool>
            <TbIcon size={26} icon={measured("span")} />
          </MeasureTool>
        </MeasureTools>

        <FoldHead $mt={13}>
          <ChevronDown size={15} strokeWidth={1.4} />
          <span>Page Scale</span>
        </FoldHead>
        <FormRow $mt={3}>
          <FieldLabel>Page:</FieldLabel>
          <span>6</span>
        </FormRow>
        <FormRow $mt={2} $h={25}>
          <FieldLabel>Scale:</FieldLabel>
          <SoftButton>Calibrate</SoftButton>
        </FormRow>
        <FormRow $mt={3}>
          <Indent />
          <RadioDot />
          <span>Preset</span>
          <RadioDot $ml={14} $on />
          <span>Custom</span>
        </FormRow>
        <FormRow $mt={5} $h={25}>
          <Indent />
          <TextBox $w={59}>0.125</TextBox>
          <TextBox $w={65} $ml={11}>
            in <ChevronDown size={13} strokeWidth={1.8} />
          </TextBox>
          <Equals>=</Equals>
          <TextBox $w={58}>1'-0"</TextBox>
          <TextBox $w={63} $ml={12}>
            ft' in" <ChevronDown size={13} strokeWidth={1.8} />
          </TextBox>
        </FormRow>
        <FormRow $mt={4}>
          <Indent />
          <CheckBox />
          <span>Separate Vertical Scale</span>
        </FormRow>
        <FormRow $mt={4}>
          <Indent />
          <SoftButton>Apply to Page Range</SoftButton>
        </FormRow>
        <FormRow $mt={8} $h={23}>
          <FieldLabel>Precision:</FieldLabel>
          <TextBox $w={135}>
            1/2 <ChevronDown size={13} strokeWidth={1.8} />
          </TextBox>
        </FormRow>

        <FoldHead $mt={11}>
          <ChevronDown size={15} strokeWidth={1.4} />
          <span>Measurement Properties</span>
        </FoldHead>
        <FormRow $mt={9}>
          <FieldLabel $off>Subject</FieldLabel>
          <TextBox $grow $off />
        </FormRow>
        <FormRow $mt={8} $h={23}>
          <FieldLabel $off>Label</FieldLabel>
          <TextBox $grow $off />
        </FormRow>

        <FoldHead $mt={11}>
          <ChevronDown size={15} strokeWidth={1.4} />
          <span>Viewports</span>
        </FoldHead>
        <ViewportBox>Viewport</ViewportBox>
        <ViewportTools $mt={8}>
          <Plus size={19} strokeWidth={1.4} />
          <FadedTool>
            <X size={19} strokeWidth={1.3} />
          </FadedTool>
          <FadedTool>
            <Pencil size={17} strokeWidth={1.3} />
          </FadedTool>
          <TrashTool>
            <Trash2 size={19} strokeWidth={1.3} />
            <ChevronDown size={13} strokeWidth={1.8} />
          </TrashTool>
        </ViewportTools>
      </Measure>

      <Rail $right>
        {rightRail.map((name) => (
          <RailItem key={name} $active={name === "ruler"}>
            {name === "gear" && <Settings size={22} strokeWidth={1.3} />}
            {name === "search" && <Search size={22} strokeWidth={1.4} />}
            {rail[name] && <TbIcon size={24} sw={1.3} icon={rail[name]} />}
          </RailItem>
        ))}
      </Rail>
    </Main>

    <StatusBar>
      <span>&nbsp;Ready</span>
      <StatusIcons>
        <StatusBtn><TbIcon size={24} sw={1.3} icon={tb.grid} /></StatusBtn>
        <StatusBtn><TbIcon size={24} sw={1.3} icon={tb.snap} /></StatusBtn>
        <StatusBtn $active><TbIcon size={24} sw={1.3} icon={tb.snapPage} /></StatusBtn>
        <StatusBtn $active><TbIcon size={24} sw={1.3} icon={tb.snapTool} /></StatusBtn>
        <StatusBtn><TbIcon size={24} sw={1.3} icon={tb.snapOff} /></StatusBtn>
        <StatusBtn><TbIcon size={24} sw={1.3} icon={tb.swap} /></StatusBtn>
        <ChevronDown size={13} strokeWidth={1.4} />
      </StatusIcons>
      <StatText $ml={34}>1/8" = 1'-0"</StatText>
      <StatText $ml={32}>42.00 x 30.00 in</StatText>
      <StatText $ml={66}>(2.88, 15.03)</StatText>
    </StatusBar>
    <Wallpaper />
  </Page>
);

export default App;
